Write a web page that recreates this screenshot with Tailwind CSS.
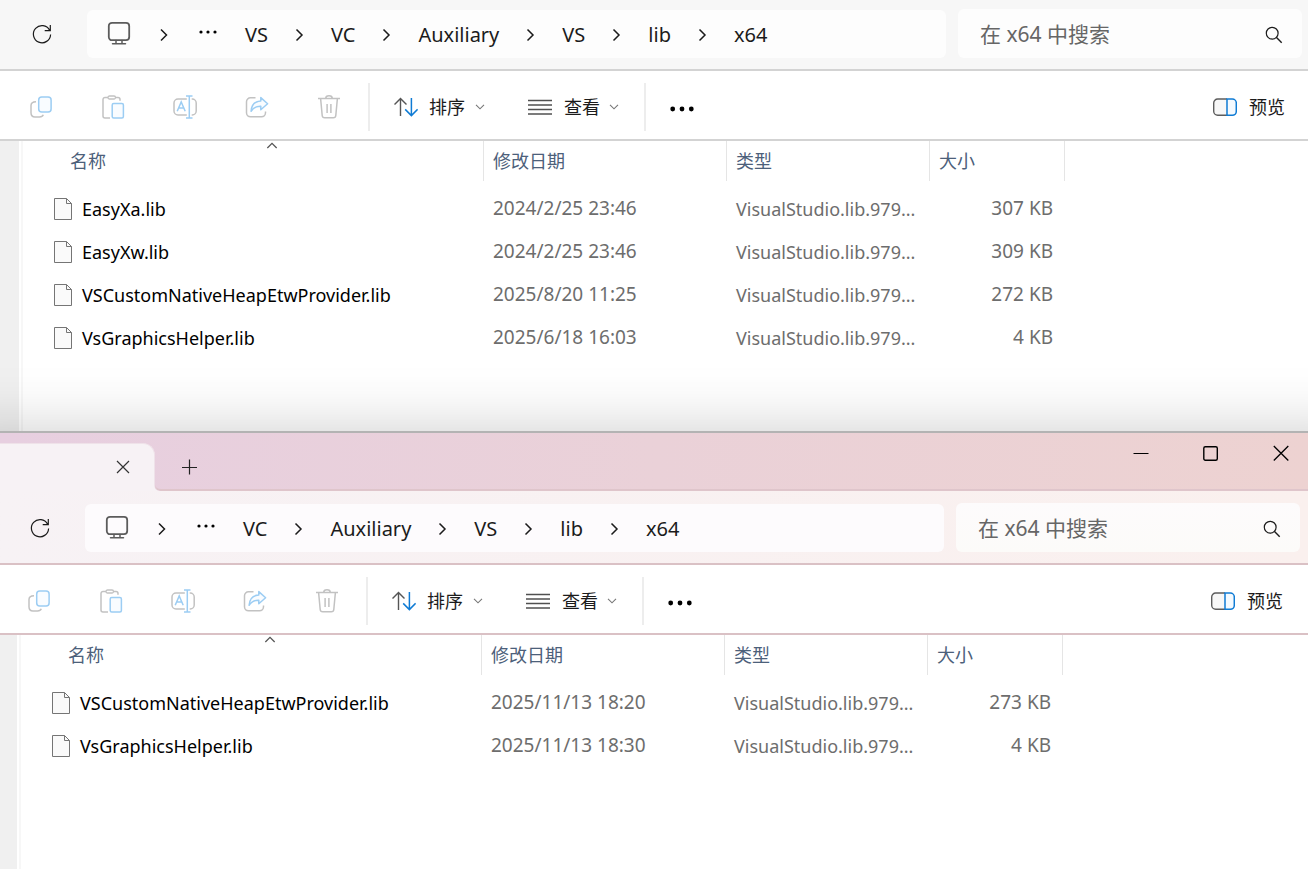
<!DOCTYPE html>
<html lang="zh-CN">
  <head>
    <meta charset="UTF-8" />
    <meta name="viewport" content="width=device-width, initial-scale=1.0" />
    <title>x64 - 文件资源管理器</title>
    <script src="https://cdn.jsdelivr.net/npm/@tailwindcss/browser@4"></script>
  </head>
  <body class="min-h-screen flex flex-col overflow-hidden bg-white text-[#1b1b1b] text-lg font-['Noto_Sans','Noto_Sans_CJK_SC',sans-serif]">
    <!-- Icon set -->
    <svg class="hidden" fill="none">
      <symbol id="refresh" viewBox="0 0 24 24">
        <path d="M19.6 8.1A8.6 8.6 0 1 0 20.6 12.5M20.3 3v5.6h-5.6" fill="none" stroke="currentColor" stroke-width="1.2" />
      </symbol>
      <symbol id="monitor" viewBox="0 0 24 24">
        <rect x="1.8" y="1.8" width="20.4" height="17.4" rx="3.2" fill="none" stroke="#5c5c5c" stroke-width="1.8" />
        <path d="M9 19.5v3M15 19.5v3M5.5 22.7h13" fill="none" stroke="#5c5c5c" stroke-width="1.5" stroke-linecap="round" />
      </symbol>
      <symbol id="chevron-right" viewBox="0 0 8 14">
        <path d="M1 1.5 6.5 7 1 12.5" fill="none" stroke="currentColor" stroke-width="1.5" />
      </symbol>
      <symbol id="chevron-down" viewBox="0 0 10 6">
        <path d="M1 .8 5 4.8 9 .8" fill="none" stroke="currentColor" stroke-width="1.1" />
      </symbol>
      <symbol id="path-dots" viewBox="0 0 18 4">
        <circle cx="2" cy="2" r="1.6" /><circle cx="9" cy="2" r="1.6" /><circle cx="16" cy="2" r="1.6" />
      </symbol>
      <symbol id="more" viewBox="0 0 24 6">
        <circle cx="2.7" cy="3" r="2.4" /><circle cx="12" cy="3" r="2.4" /><circle cx="21.3" cy="3" r="2.4" />
      </symbol>
      <symbol id="search" viewBox="0 0 18 18">
        <path d="m11.3 11.3 5.4 5.4" stroke="currentColor" stroke-width="1.4" />
        <circle cx="7.2" cy="7.2" r="5.9" fill="none" stroke="currentColor" stroke-width="1.2" />
      </symbol>
      <symbol id="copy" viewBox="0 0 24 24">
        <path d="M7 6.7C3.8 6.7 2 7.8 2 10.5v7.3C2 20.2 3.6 22 6 22h4.5c2 0 3.2-.8 3.8-2.2" fill="none" stroke="#c2c2c2" stroke-width="1.5" />
        <rect x="9.7" y="2" width="12.4" height="15" rx="3" fill="#f9fcff" stroke="#9ccdf3" stroke-width="1.5" />
      </symbol>
      <symbol id="paste" viewBox="0 0 24 24">
        <path d="M7 2.5H4A2 2 0 0 0 2 4.5V21a2 2 0 0 0 2 2h5M14.5 2.500H17a2 2 0 0 1 2 2V5.800" fill="none" stroke="#c2c2c2" stroke-width="1.5" />
        <rect x="7" y="1" width="7.5" height="3" rx="1.5" fill="none" stroke="#c2c2c2" stroke-width="1.3" />
        <rect x="11.2" y="8.5" width="11.2" height="14.5" rx="1.5" fill="#f9fcff" stroke="#9ccdf3" stroke-width="1.5" />
      </symbol>
      <symbol id="rename" viewBox="0 0 24 24">
        <path d="M13.8 4H5a4 4 0 0 0-4 4v8a4 4 0 0 0 4 4h8.800M18.700 4h.5a4 4 0 0 1 4 4v8a4 4 0 0 1-4 4h-.5" fill="none" stroke="#c2c2c2" stroke-width="1.5" />
        <path d="M4.200 16.200 8.200 7l4 9.200M5.600 13h5.200M16.300 1v22M13 1h6.500M13 23h6.500" fill="none" stroke="#9ccdf3" stroke-width="1.5" />
      </symbol>
      <symbol id="share" viewBox="0 0 24 24">
        <path d="M10.500 2.800H5.500A4 4 0 0 0 1.500 6.800v11a4 4 0 0 0 4 4h11a4 4 0 0 0 4-4v-1.300" fill="none" stroke="#c2c2c2" stroke-width="1.5" />
        <path d="M15.800 2.600 22.600 8.800l-6.800 6v-3.500c-4.500-.2-7.500 1.500-9.700 5C6.500 10.200 10 6.300 15.800 6z" fill="#f9fcff" stroke="#9ccdf3" stroke-width="1.5" stroke-linejoin="round" />
      </symbol>
      <symbol id="trash" viewBox="0 0 24 24">
        <path d="M1 3.500h22M8.700 3.500c0-3.600 6.600-3.600 6.600 0M3.600 3.500 5.200 20.500a2.500 2.500 0 0 0 2.500 2.300h8.600a2.500 2.500 0 0 0 2.500-2.300L20.400 3.500M10.100 9v9M13.900 9v9" fill="none" stroke="#c2c2c2" stroke-width="1.5" />
      </symbol>
      <symbol id="sort" viewBox="0 0 24 24">
        <path d="M6.500 21V3.500M.5 9.600l6-6.200 6 6.200" fill="none" stroke="#555" stroke-width="1.4" />
        <path d="M17.400 3v17.500M11.200 14.400l6.200 6.200 6.200-6.200" fill="none" stroke="#0f7bd4" stroke-width="1.5" />
      </symbol>
      <symbol id="view" viewBox="0 0 24 24">
        <path d="M0 5.500h24M0 10h24M0 14.500h24M0 19h24" fill="none" stroke="#505050" stroke-width="1.4" />
      </symbol>
      <symbol id="preview" viewBox="0 0 24 24">
        <path d="M14 4H4.700a4 4 0 0 0-4 4v8.300a4 4 0 0 0 4 4H14" fill="#f7f7f7" stroke="#5c5c5c" stroke-width="1.4" />
        <path d="M14 4h5.300a4 4 0 0 1 4 4v8.300a4 4 0 0 1-4 4H14z" fill="#f4faff" stroke="#0f7bd4" stroke-width="1.5" />
      </symbol>
      <symbol id="file" viewBox="0 0 18 22">
        <path d="M.5.5h12l5 5v16H.5z" fill="#fafafa" stroke="#757575" />
        <path d="M12.500.5v5h5" fill="none" stroke="#757575" />
      </symbol>
    </svg>

    <!-- Back window -->
    <section class="h-[431px] shrink-0 flex flex-col">
      <div class="flex items-end h-[71px] pr-1.5 pb-[11px] bg-[#f7f7f7] border-b-2 border-[#d3d3d3]">
        <button class="w-[87px] h-12 pl-[30px]" aria-label="刷新"><svg class="w-6 h-6"><use href="#refresh" /></svg></button>
        <nav class="flex-1 flex items-center h-12 pt-0.5 pl-5 rounded-md bg-[#fdfdfd] text-xl" aria-label="路径">
          <button class="mb-1" aria-label="此电脑"><svg class="w-6 h-6"><use href="#monitor" /></svg></button>
          <svg class="w-2 h-3.5 mx-[29px] shrink-0"><use href="#chevron-right" /></svg>
          <button class="mb-1.5 ml-0.5 mr-7" aria-label="更多路径"><svg class="w-[18px] h-1"><use href="#path-dots" /></svg></button>
          <a href="#">VS</a>
          <svg class="w-[9px] h-3.5 mx-[27px] shrink-0"><use href="#chevron-right" /></svg>
          <a href="#">VC</a>
          <svg class="w-[9px] h-3.5 mx-[27px] shrink-0"><use href="#chevron-right" /></svg>
          <a href="#">Auxiliary</a>
          <svg class="w-[9px] h-3.5 mx-[27px] shrink-0"><use href="#chevron-right" /></svg>
          <a href="#">VS</a>
          <svg class="w-[9px] h-3.5 mx-[27px] shrink-0"><use href="#chevron-right" /></svg>
          <a href="#">lib</a>
          <svg class="w-[9px] h-3.5 mx-[27px] shrink-0"><use href="#chevron-right" /></svg>
          <a href="#">x64</a>
        </nav>
        <label class="flex items-center w-[344px] h-[49px] ml-3 pt-0.5 pl-[22px] pr-[19px] rounded-md bg-[#fdfdfd]">
          <input type="search" placeholder="在 x64 中搜索" aria-label="搜索" class="flex-1 min-w-0 text-[21px] outline-none placeholder:text-[#666]" />
          <svg class="w-[18px] h-[18px]"><use href="#search" /></svg>
        </label>
      </div>

      <div class="flex items-center h-[70px] pt-1 pl-[5px] pr-[23px] border-b-2 border-[#d3d3d3]">
        <button class="w-[72px] flex justify-center" aria-label="复制"><svg class="w-6 h-6"><use href="#copy" /></svg></button>
        <button class="w-[72px] flex justify-center" aria-label="粘贴"><svg class="w-6 h-6"><use href="#paste" /></svg></button>
        <button class="w-[72px] flex justify-center" aria-label="重命名"><svg class="w-6 h-6"><use href="#rename" /></svg></button>
        <button class="w-[72px] flex justify-center" aria-label="共享"><svg class="w-6 h-6"><use href="#share" /></svg></button>
        <button class="w-[72px] flex justify-center" aria-label="删除"><svg class="w-6 h-6"><use href="#trash" /></svg></button>
        <div class="w-0.5 h-12 ml-[3px] bg-[#ededed]"></div>
        <button class="flex items-center ml-6">
          <svg class="w-6 h-6 mr-[11px]"><use href="#sort" /></svg>排序
          <svg class="w-2.5 h-1.5 ml-2.5 text-[#777]"><use href="#chevron-down" /></svg>
        </button>
        <button class="flex items-center ml-[43px]">
          <svg class="w-6 h-6 mr-3"><use href="#view" /></svg>查看
          <svg class="w-2.5 h-1.5 ml-[9px] text-[#777]"><use href="#chevron-down" /></svg>
        </button>
        <div class="w-0.5 h-12 ml-[25px] bg-[#ededed]"></div>
        <button class="ml-6 pt-1" aria-label="更多"><svg class="w-6 h-1.5"><use href="#more" /></svg></button>
        <button class="flex items-center gap-3 ml-auto"><svg class="w-6 h-6"><use href="#preview" /></svg>预览</button>
      </div>

      <div class="flex flex-1">
        <aside class="w-[23px] bg-white border-r-2 border-[#f7f7f7]"><div class="w-[19px] h-full bg-[#f0f0f0]"></div></aside>
        <table class="table-fixed self-start w-[1042px] whitespace-nowrap text-[#6d6d6d]">
          <thead>
            <tr class="h-[46px] align-top text-left text-[#4c607a]">
              <th class="w-[461px] p-0 font-normal">
                <div class="relative flex items-center h-10 ml-[38px] pl-[9px] border-r border-[#e5e5e5]">
                  名称
                  <svg class="absolute inset-x-0 top-px mx-auto w-3 h-[7px] rotate-180 text-[#555]"><use href="#chevron-down" /></svg>
                </div>
              </th>
              <th class="w-[243px] p-0 font-normal"><div class="flex items-center h-10 pl-[9px] border-r border-[#e5e5e5]">修改日期</div></th>
              <th class="w-[203px] p-0 font-normal"><div class="flex items-center h-10 pl-[9px] border-r border-[#e5e5e5]">类型</div></th>
              <th class="w-[135px] p-0 font-normal"><div class="flex items-center h-10 pl-[9px] border-r border-[#e5e5e5]">大小</div></th>
            </tr>
          </thead>
          <tbody>
            <tr class="h-[43px]">
              <td class="p-0 pl-[31px] text-black"><div class="flex items-center gap-2.5"><svg class="w-[18px] h-[22px]"><use href="#file" /></svg>EasyXa.lib</div></td>
              <td class="p-0 pl-[9px] text-[19px]">2024/2/25 23:46</td>
              <td class="p-0 pl-[9px]">VisualStudio.lib.979...</td>
              <td class="p-0 pr-3 text-right text-[19px]">307 KB</td>
            </tr>
            <tr class="h-[43px]">
              <td class="p-0 pl-[31px] text-black"><div class="flex items-center gap-2.5"><svg class="w-[18px] h-[22px]"><use href="#file" /></svg>EasyXw.lib</div></td>
              <td class="p-0 pl-[9px] text-[19px]">2024/2/25 23:46</td>
              <td class="p-0 pl-[9px]">VisualStudio.lib.979...</td>
              <td class="p-0 pr-3 text-right text-[19px]">309 KB</td>
            </tr>
            <tr class="h-[43px]">
              <td class="p-0 pl-[31px] text-black"><div class="flex items-center gap-2.5"><svg class="w-[18px] h-[22px]"><use href="#file" /></svg>VSCustomNativeHeapEtwProvider.lib</div></td>
              <td class="p-0 pl-[9px] text-[19px]">2025/8/20 11:25</td>
              <td class="p-0 pl-[9px]">VisualStudio.lib.979...</td>
              <td class="p-0 pr-3 text-right text-[19px]">272 KB</td>
            </tr>
            <tr class="h-[43px]">
              <td class="p-0 pl-[31px] text-black"><div class="flex items-center gap-2.5"><svg class="w-[18px] h-[22px]"><use href="#file" /></svg>VsGraphicsHelper.lib</div></td>
              <td class="p-0 pl-[9px] text-[19px]">2025/6/18 16:03</td>
              <td class="p-0 pl-[9px]">VisualStudio.lib.979...</td>
              <td class="p-0 pr-3 text-right text-[19px]">4 KB</td>
            </tr>
          </tbody>
        </table>
      </div>
    </section>

    <!-- Front window -->
    <section class="relative flex-1 flex flex-col bg-white border-t-2 border-[#b3b3b3] shadow-[0_60px_60px_60px_rgba(0,0,0,0.2)]">
      <div class="flex h-[58px] bg-linear-to-r from-[#e7cfe0] via-[#ead1d8] to-[#edd2d1]">
        <div class="relative w-[155px] mt-2.5 flex items-center justify-end pr-[23px] pb-0.5 rounded-tr-xl bg-[#f7f2f5] border-t border-r border-[#efe2e9]">
          <button aria-label="关闭标签页"><svg class="w-4 h-4" viewBox="0 0 16 16"><path d="m2 2 12 12M14 2 2 14" stroke="#333" stroke-width="1.2" /></svg></button>
          <svg class="absolute left-full bottom-0 w-1.5 h-1.5" viewBox="0 0 6 6"><path d="M0 0v6h6A6 6 0 0 1 0 0" fill="#f7f2f5" /></svg>
        </div>
        <div class="flex-1 flex items-start rounded-bl-md border-b-2 border-[#dfc5cb]">
          <button class="mt-[26px] ml-[26px]" aria-label="新建标签页"><svg class="w-4 h-4" viewBox="0 0 16 16"><path d="M8.500.5v15M1 8.500h15" stroke="#222" stroke-width="1.2" /></svg></button>
          <div class="flex gap-[54px] ml-auto mt-3 pr-[19px]">
            <button aria-label="最小化"><svg class="w-4 h-4" viewBox="0 0 16 16"><path d="M.5 8.500h15" stroke="#000" /></svg></button>
            <button aria-label="最大化"><svg class="w-4 h-4" viewBox="0 0 16 16"><rect x=".8" y="1.700" width="13.500" height="13.500" rx="1.500" fill="none" stroke="#000" stroke-width="1.4" /></svg></button>
            <button aria-label="关闭"><svg class="w-4 h-4" viewBox="0 0 16 16"><path d="m.8 1 14.500 14.500M15.300 1 .8 15.500" stroke="#000" stroke-width="1.3" /></svg></button>
          </div>
        </div>
      </div>
      <div class="flex items-end h-[74px] pr-2 pb-[11px] bg-linear-to-r from-[#f7f2f5] to-[#faf0ee] border-b-2 border-[#dac1c5]">
        <button class="w-[85px] h-12 pl-7" aria-label="刷新"><svg class="w-6 h-6"><use href="#refresh" /></svg></button>
        <nav class="flex-1 flex items-center h-12 pt-0.5 pl-5 rounded-md bg-[#fdfbfd] text-xl" aria-label="路径">
          <button class="mb-1" aria-label="此电脑"><svg class="w-6 h-6"><use href="#monitor" /></svg></button>
          <svg class="w-2 h-3.5 mx-[29px] shrink-0"><use href="#chevron-right" /></svg>
          <button class="mb-1.5 ml-0.5 mr-7" aria-label="更多路径"><svg class="w-[18px] h-1"><use href="#path-dots" /></svg></button>
          <a href="#">VC</a>
          <svg class="w-[9px] h-3.5 mx-[27px] shrink-0"><use href="#chevron-right" /></svg>
          <a href="#">Auxiliary</a>
          <svg class="w-[9px] h-3.5 mx-[27px] shrink-0"><use href="#chevron-right" /></svg>
          <a href="#">VS</a>
          <svg class="w-[9px] h-3.5 mx-[27px] shrink-0"><use href="#chevron-right" /></svg>
          <a href="#">lib</a>
          <svg class="w-[9px] h-3.5 mx-[27px] shrink-0"><use href="#chevron-right" /></svg>
          <a href="#">x64</a>
        </nav>
        <label class="flex items-center w-[344px] h-[49px] ml-3 pt-0.5 pl-[22px] pr-[19px] rounded-md bg-linear-to-b from-[#fdfbfc] to-[#fcfbf9]">
          <input type="search" placeholder="在 x64 中搜索" aria-label="搜索" class="flex-1 min-w-0 text-[21px] outline-none placeholder:text-[#666]" />
          <svg class="w-[18px] h-[18px]"><use href="#search" /></svg>
        </label>
      </div>

      <div class="flex items-center h-[70px] pt-1 pl-[3px] pr-[25px] border-b-2 border-[#dac1c5]">
        <button class="w-[72px] flex justify-center" aria-label="复制"><svg class="w-6 h-6"><use href="#copy" /></svg></button>
        <button class="w-[72px] flex justify-center" aria-label="粘贴"><svg class="w-6 h-6"><use href="#paste" /></svg></button>
        <button class="w-[72px] flex justify-center" aria-label="重命名"><svg class="w-6 h-6"><use href="#rename" /></svg></button>
        <button class="w-[72px] flex justify-center" aria-label="共享"><svg class="w-6 h-6"><use href="#share" /></svg></button>
        <button class="w-[72px] flex justify-center" aria-label="删除"><svg class="w-6 h-6"><use href="#trash" /></svg></button>
        <div class="w-0.5 h-12 ml-[3px] bg-[#ededed]"></div>
        <button class="flex items-center ml-6">
          <svg class="w-6 h-6 mr-[11px]"><use href="#sort" /></svg>排序
          <svg class="w-2.5 h-1.5 ml-2.5 text-[#777]"><use href="#chevron-down" /></svg>
        </button>
        <button class="flex items-center ml-[43px]">
          <svg class="w-6 h-6 mr-3"><use href="#view" /></svg>查看
          <svg class="w-2.5 h-1.5 ml-[9px] text-[#777]"><use href="#chevron-down" /></svg>
        </button>
        <div class="w-0.5 h-12 ml-[25px] bg-[#ededed]"></div>
        <button class="ml-6 pt-1" aria-label="更多"><svg class="w-6 h-1.5"><use href="#more" /></svg></button>
        <button class="flex items-center gap-3 ml-auto"><svg class="w-6 h-6"><use href="#preview" /></svg>预览</button>
      </div>

      <div class="flex flex-1">
        <aside class="w-[21px] bg-white border-r-2 border-[#f7f7f7]"><div class="w-[17px] h-full bg-[#f0f0f0]"></div></aside>
        <table class="table-fixed self-start w-[1042px] whitespace-nowrap text-[#6d6d6d]">
          <thead>
            <tr class="h-[46px] align-top text-left text-[#4c607a]">
              <th class="w-[461px] p-0 font-normal">
                <div class="relative flex items-center h-10 ml-[38px] pl-[9px] border-r border-[#e5e5e5]">
                  名称
                  <svg class="absolute inset-x-0 top-px mx-auto w-3 h-[7px] rotate-180 text-[#555]"><use href="#chevron-down" /></svg>
                </div>
              </th>
              <th class="w-[243px] p-0 font-normal"><div class="flex items-center h-10 pl-[9px] border-r border-[#e5e5e5]">修改日期</div></th>
              <th class="w-[203px] p-0 font-normal"><div class="flex items-center h-10 pl-[9px] border-r border-[#e5e5e5]">类型</div></th>
              <th class="w-[135px] p-0 font-normal"><div class="flex items-center h-10 pl-[9px] border-r border-[#e5e5e5]">大小</div></th>
            </tr>
          </thead>
          <tbody>
            <tr class="h-[43px]">
              <td class="p-0 pl-[31px] text-black"><div class="flex items-center gap-2.5"><svg class="w-[18px] h-[22px]"><use href="#file" /></svg>VSCustomNativeHeapEtwProvider.lib</div></td>
              <td class="p-0 pl-[9px] text-[19px]">2025/11/13 18:20</td>
              <td class="p-0 pl-[9px]">VisualStudio.lib.979...</td>
              <td class="p-0 pr-3 text-right text-[19px]">273 KB</td>
            </tr>
            <tr class="h-[43px]">
              <td class="p-0 pl-[31px] text-black"><div class="flex items-center gap-2.5"><svg class="w-[18px] h-[22px]"><use href="#file" /></svg>VsGraphicsHelper.lib</div></td>
              <td class="p-0 pl-[9px] text-[19px]">2025/11/13 18:30</td>
              <td class="p-0 pl-[9px]">VisualStudio.lib.979...</td>
              <td class="p-0 pr-3 text-right text-[19px]">4 KB</td>
            </tr>
          </tbody>
        </table>
      </div>
    </section>
  </body>
</html>
